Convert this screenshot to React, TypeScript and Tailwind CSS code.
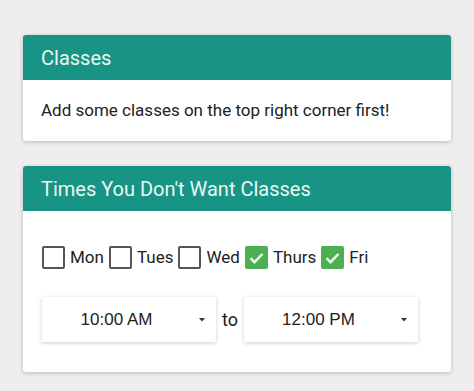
import React from "react";

const days = [
  { label: "Mon", checked: false },
  { label: "Tues", checked: false },
  { label: "Wed", checked: false },
  { label: "Thurs", checked: true },
  { label: "Fri", checked: true },
];

const Card = ({ title, children }: { title: string; children: React.ReactNode }) => (
  <div className="bg-white rounded-[3px] overflow-hidden shadow-[0_1px_4px_rgba(0,0,0,0.22)]">
    <div className="bg-[#179484] h-[45px] flex items-center px-[18px]">
      <h2 className="text-[20px] text-[#eaf7f4] leading-none">{title}</h2>
    </div>
    {children}
  </div>
);

const TimeSelect = ({ value }: { value: string }) => (
  <div className="w-[174px] h-[45px] bg-white shadow-[0_1px_4px_rgba(0,0,0,0.2)] flex items-center">
    <span className="flex-1 text-center pr-[8px] text-[17px] text-[#222] font-['Liberation_Sans',Arial,sans-serif]">
      {value}
    </span>
    <svg width="6" height="4" viewBox="0 0 6 4" className="mr-[11px]">
      <path d="M0 0h6L3 3.5z" fill="#333" />
    </svg>
  </div>
);

export default function App() {
  return (
    <div className="min-h-[391px] bg-[#eeeeee] pt-[35px] px-[23px] pb-[20px] font-['Roboto',sans-serif]">
      <div className="w-[428px] flex flex-col gap-[25px]">
        <Card title="Classes">
          <p className="text-[17px] text-[#222] px-[18px] pt-[18px] pb-[19px] leading-6">
            Add some classes on the top right corner first!
          </p>
        </Card>

        <Card title="Times You Don't Want Classes">
          <div className="px-[19px] pt-[35px] pb-[30px]">
            <div className="flex items-center gap-[5px] h-[23px]">
              {days.map((d) => (
                <label key={d.label} className="flex items-center gap-[5px]">
                  {d.checked ? (
                    <span className="w-[23px] h-[23px] bg-[#4caf50] rounded-[2px] flex items-center justify-center">
                      <svg width="15" height="12" viewBox="0 0 15 12">
                        <path d="M1.5 6.2l4 4L13.5 1.8" stroke="#eaf7ea" strokeWidth="2.4" fill="none" />
                      </svg>
                    </span>
                  ) : (
                    <span className="w-[23px] h-[23px] border-2 border-[#555] rounded-[2px]" />
                  )}
                  <span className="text-[17px] text-[#222] leading-none">{d.label}</span>
                </label>
              ))}
            </div>
            <div className="flex items-center mt-[28px] gap-[6px]">
              <TimeSelect value="10:00 AM" />
              <span className="text-[18px] text-[#222]">to</span>
              <TimeSelect value="12:00 PM" />
            </div>
          </div>
        </Card>
      </div>
    </div>
  );
}
